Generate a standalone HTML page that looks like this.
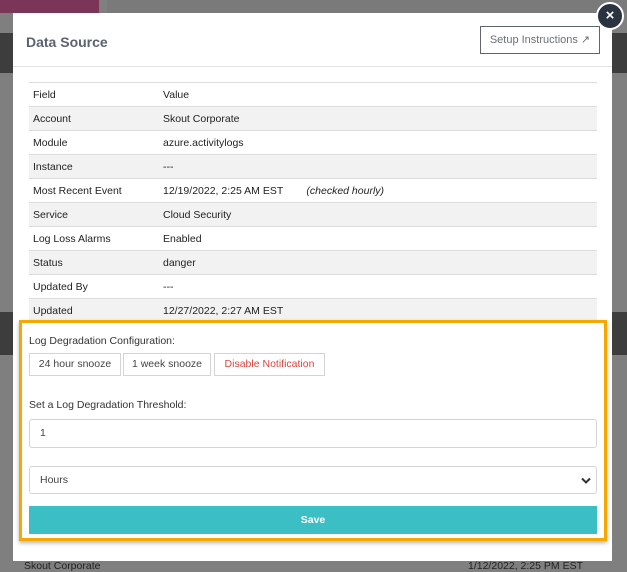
<!DOCTYPE html>
<html><head><style>
*{box-sizing:border-box;margin:0;padding:0}
body{width:627px;height:568px;overflow:hidden;background:#7f7f7f;font-family:"Liberation Sans",sans-serif;position:relative}
.bg{position:absolute;left:0;width:627px}
.modal{position:absolute;left:13px;top:13px;width:599px;height:548px;background:#fff}
.title{position:absolute;left:13px;top:21px;font-size:14px;font-weight:bold;color:#5b6270}
.setup{position:absolute;left:467px;top:13px;width:120px;height:28px;border:1px solid #5f6670;font-size:11px;color:#6b7078;text-align:center;line-height:26px}
.hr{position:absolute;left:0;top:53px;width:599px;height:1px;background:#e3e3e3}
table{position:absolute;left:16px;top:69px;width:568px;border-collapse:collapse;font-size:10.5px;color:#222}
td{height:24px;border-top:1px solid #dcdcdc;padding-left:4px;vertical-align:middle}
td:first-child{width:130px}
tr:nth-child(even) td{background:#f2f2f2}
.box{position:absolute;left:6px;top:307px;width:588px;height:221px;border:3px solid #f5a800;background:#fff;box-shadow:0 2px 4px rgba(0,0,0,.3)}
.lbl{position:absolute;font-size:10.5px;color:#333}
.btn{position:absolute;top:30px;height:23px;border:1px solid #d4d4d4;font-size:10.5px;color:#444;line-height:21px;text-align:center}
.inp{position:absolute;left:7px;width:568px;border:1px solid #d4d4d4;border-radius:3px;font-size:10.5px;color:#444;padding-left:10px}
.save{position:absolute;left:7px;top:183px;width:568px;height:28px;background:#3bbfc4;color:#fff;font-size:10.5px;font-weight:bold;text-align:center;line-height:28px}
.close{position:absolute;left:596px;top:2px;width:28px;height:28px;border-radius:50%;background:#2b3340;border:2px solid #fff;color:#fff;font-weight:bold;font-size:15px;text-align:center;line-height:23px}
</style></head><body>
<div class="bg" style="top:0;height:13px;left:0;width:99px;background:#7a3557"></div>
<div class="bg" style="top:0;height:13px;left:107px;width:520px;background:#7a7a7a"></div>
<div class="bg" style="top:33px;height:40px;background:#3d3d3d"></div>
<div class="bg" style="top:312px;height:43px;background:#3d3d3d"></div>
<div style="position:absolute;left:24px;top:560px;font-size:10.5px;color:#222">Skout Corporate</div>
<div style="position:absolute;left:468px;top:560px;font-size:10.5px;color:#222">1/12/2022, 2:25 PM EST</div>
<div class="modal">
<div class="title">Data Source</div>
<div class="setup">Setup Instructions &#x2197;</div>
<div class="hr"></div>
<table>
<tr><td>Field</td><td>Value</td></tr>
<tr><td>Account</td><td>Skout Corporate</td></tr>
<tr><td>Module</td><td>azure.activitylogs</td></tr>
<tr><td>Instance</td><td>---</td></tr>
<tr><td>Most Recent Event</td><td>12/19/2022, 2:25 AM EST &nbsp;&nbsp;&nbsp;&nbsp;&nbsp;&nbsp;&nbsp;<i>(checked hourly)</i></td></tr>
<tr><td>Service</td><td>Cloud Security</td></tr>
<tr><td>Log Loss Alarms</td><td>Enabled</td></tr>
<tr><td>Status</td><td>danger</td></tr>
<tr><td>Updated By</td><td>---</td></tr>
<tr><td>Updated</td><td>12/27/2022, 2:27 AM EST</td></tr>
</table>
<div class="box">
<div class="lbl" style="left:7px;top:12px">Log Degradation Configuration:</div>
<div class="btn" style="left:7px;width:92px">24 hour snooze</div>
<div class="btn" style="left:101px;width:88px">1 week snooze</div>
<div class="btn" style="left:192px;width:111px;color:#d9443f">Disable Notification</div>
<div class="lbl" style="left:7px;top:76px">Set a Log Degradation Threshold:</div>
<div class="inp" style="top:96px;height:29px;line-height:27px">1</div>
<div class="inp" style="top:143px;height:28px;line-height:26px">Hours<svg style="position:absolute;right:5px;top:10px" width="10" height="7" viewBox="0 0 10 7"><path d="M1 1.5L5 5.5L9 1.5" stroke="#333" stroke-width="2" fill="none"/></svg></div>
<div class="save">Save</div>
</div>
</div>
<div class="close">&times;</div>
</body></html>
